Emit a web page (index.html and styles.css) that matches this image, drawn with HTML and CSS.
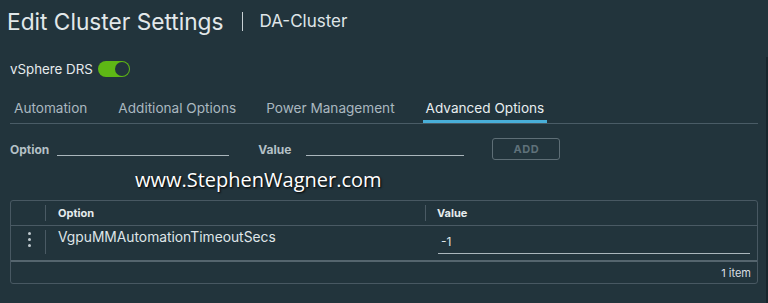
FILE: index.html
```html
<!DOCTYPE html>
<html>
<head>
<meta charset="utf-8">
<link rel="stylesheet" href="styles.css">
</head>
<body>
<div class="page">
  <div class="header">
    <h1 class="title">Edit Cluster Settings</h1>
    <span class="sep"></span>
    <span class="subtitle">DA-Cluster</span>
  </div>
  <div class="drs">
    <span class="drs-label">vSphere DRS</span>
    <span class="toggle"><span class="knob"></span></span>
  </div>
  <div class="tabs">
    <span class="tab t1">Automation</span>
    <span class="tab t2">Additional Options</span>
    <span class="tab t3">Power Management</span>
    <span class="tab active">Advanced Options</span>
  </div>
  <div class="form">
    <span class="flabel">Option</span>
    <span class="finput opt"></span>
    <span class="flabel vlabel">Value</span>
    <span class="finput val"></span>
    <span class="btn">ADD</span>
  </div>
  <div class="watermark">www.StephenWagner.com</div>
  <div class="grid">
    <div class="row head">
      <div class="c0"></div>
      <div class="c1">Option</div>
      <div class="c2">Value</div>
    </div>
    <div class="row body">
      <div class="c0"><span class="dots"><i></i><i></i><i></i></span></div>
      <div class="c1">VgpuMMAutomationTimeoutSecs</div>
      <div class="c2"><span class="vin">-1</span></div>
    </div>
    <div class="foot">1 item</div>
  </div>
  <div class="scroll"></div>
</div>
</body>
</html>
```
FILE: styles.css
```css
html, body {
  margin: 0;
  padding: 0;
  background: #22343c;
  width: 768px;
  height: 303px;
  overflow: hidden;
}
.page {
  position: relative;
  font-family: Inter, Lato, sans-serif;
  color: #dfe5e8;
  padding: 0 10px 0 10px;
}
.header {
  display: flex;
  align-items: center;
  height: 42px;
  margin-left: -3px;
}
.title {
  margin: 0;
  font-weight: 400;
  font-size: 22.7px;
  color: #e2e8ea;
}
.sep {
  width: 1px;
  height: 19px;
  background: #c8d0d4;
  margin: 0 17px 0 18px;
}
.subtitle {
  font-size: 17px;
  color: #dfe5e8;
}
.drs {
  display: flex;
  align-items: center;
  margin-top: 18px;
  height: 17px;
}
.drs-label {
  font-size: 13.3px;
  color: #e6ebed;
}
.toggle {
  width: 32px;
  height: 16px;
  border-radius: 8px;
  background: #5eb715;
  margin-left: 5px;
  display: flex;
  align-items: center;
  justify-content: flex-end;
  padding-right: 1px;
  box-sizing: border-box;
}
.knob {
  width: 14px;
  height: 14px;
  border-radius: 50%;
  background: #22343c;
}
.tabs {
  display: flex;
  margin-top: 21px;
  height: 25px;
  border-bottom: 1px solid #4a5c66;
  align-items: flex-start;
  font-size: 13.6px;
  color: #aab8c0;
}
.tab {
  padding-top: 2px;
  height: 22px;
  box-sizing: border-box;
}
.t1 { margin-left: 4px; }
.t2 { margin-left: 31px; }
.t3 { margin-left: 30px; }
.tab.active {
  margin-left: 28px;
  padding: 2px 3px 0 3px;
  height: 25px;
  border-bottom: 3px solid #49afd9;
  color: #e8eef0;
}
.form {
  display: flex;
  align-items: center;
  margin-top: 14px;
  height: 22px;
  font-size: 12px;
  font-weight: 700;
  color: #b4c0c6;
}
.finput {
  height: 1px;
  background: #aab6bc;
  align-self: flex-end;
  margin-bottom: 4px;
}
.opt { width: 172px; margin-left: 8px; }
.vlabel { margin-left: 29px; }
.val { width: 158px; margin-left: 15px; }
.btn {
  margin-left: 28px;
  width: 68px;
  height: 22px;
  box-sizing: border-box;
  border: 1px solid #5e6e76;
  border-radius: 3px;
  display: flex;
  align-items: center;
  justify-content: center;
  font-size: 11px;
  font-weight: 700;
  letter-spacing: 0.6px;
  color: #5f717a;
}
.watermark {
  margin-top: 7px;
  margin-left: 125px;
  font-family: "Open Sans", sans-serif;
  font-size: 20px;
  line-height: 26px;
  color: #ffffff;
  text-shadow: 1px 1px 2px #000;
}
.grid {
  margin-top: 7px;
  border: 1px solid #485862;
  border-radius: 3px;
  height: 84px;
  box-sizing: border-box;
}
.row {
  display: flex;
}
.row.head {
  height: 24px;
  border-bottom: 1px solid #4a5a64;
  font-size: 11px;
  font-weight: 700;
  color: #e6ecee;
  align-items: center;
}
.row.body {
  height: 34px;
  border-bottom: 2px solid #55656e;
  font-size: 13.8px;
  color: #dfe5e8;
  align-items: flex-start;
}
.c0 {
  width: 35px;
  box-sizing: border-box;
  border-right: 1px solid #4a5a64;
  align-self: stretch;
  margin: 4px 0;
  display: flex;
  justify-content: center;
}
.c1 {
  width: 380px;
  padding-left: 12px;
  box-sizing: border-box;
  border-right: 1px solid #4a5a64;
}
.head .c1 { align-self: stretch; display: flex; align-items: center; margin: 4px 0; }
.body .c1 { border-right: none; padding-top: 3px; }
.body .c0 { margin: 4px 0 6px 0; }
.c2 {
  flex: 1;
  padding-left: 11px;
  padding-right: 7px;
}
.body .c2 { padding-left: 12px; padding-top: 6px; }
.dots {
  display: flex;
  flex-direction: column;
  gap: 3px;
  margin-top: 2px;
  margin-left: 2px;
}
.dots i {
  display: block;
  width: 3px;
  height: 3px;
  border-radius: 50%;
  background: #c0cacf;
}
.vin {
  display: block;
  border-bottom: 1px solid #aab6bc;
  padding-left: 3px;
  height: 21px;
  font-size: 12px;
  line-height: 20px;
}
.foot {
  text-align: right;
  padding-right: 6px;
  font-size: 11px;
  color: #d8dee1;
  line-height: 22px;
}
.scroll {
  position: absolute;
  right: 0;
  top: 57px;
  width: 2px;
  height: 246px;
  background: #18262d;
}
```
